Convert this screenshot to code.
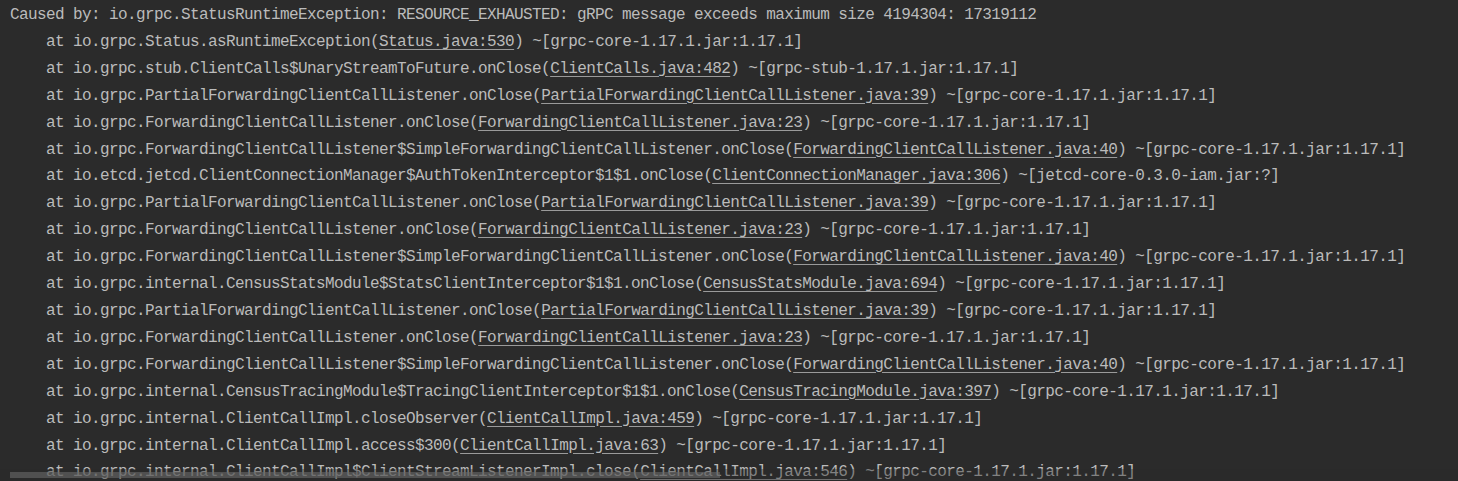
import React from "react";

type Frame = { call: string; src: string; jar: string };

const frames: Frame[] = [
    { call: "io.grpc.Status.asRuntimeException", src: "Status.java:530", jar: "grpc-core-1.17.1.jar:1.17.1" },
    { call: "io.grpc.stub.ClientCalls$UnaryStreamToFuture.onClose", src: "ClientCalls.java:482", jar: "grpc-stub-1.17.1.jar:1.17.1" },
    { call: "io.grpc.PartialForwardingClientCallListener.onClose", src: "PartialForwardingClientCallListener.java:39", jar: "grpc-core-1.17.1.jar:1.17.1" },
    { call: "io.grpc.ForwardingClientCallListener.onClose", src: "ForwardingClientCallListener.java:23", jar: "grpc-core-1.17.1.jar:1.17.1" },
    { call: "io.grpc.ForwardingClientCallListener$SimpleForwardingClientCallListener.onClose", src: "ForwardingClientCallListener.java:40", jar: "grpc-core-1.17.1.jar:1.17.1" },
    { call: "io.etcd.jetcd.ClientConnectionManager$AuthTokenInterceptor$1$1.onClose", src: "ClientConnectionManager.java:306", jar: "jetcd-core-0.3.0-iam.jar:?" },
    { call: "io.grpc.PartialForwardingClientCallListener.onClose", src: "PartialForwardingClientCallListener.java:39", jar: "grpc-core-1.17.1.jar:1.17.1" },
    { call: "io.grpc.ForwardingClientCallListener.onClose", src: "ForwardingClientCallListener.java:23", jar: "grpc-core-1.17.1.jar:1.17.1" },
    { call: "io.grpc.ForwardingClientCallListener$SimpleForwardingClientCallListener.onClose", src: "ForwardingClientCallListener.java:40", jar: "grpc-core-1.17.1.jar:1.17.1" },
    { call: "io.grpc.internal.CensusStatsModule$StatsClientInterceptor$1$1.onClose", src: "CensusStatsModule.java:694", jar: "grpc-core-1.17.1.jar:1.17.1" },
    { call: "io.grpc.PartialForwardingClientCallListener.onClose", src: "PartialForwardingClientCallListener.java:39", jar: "grpc-core-1.17.1.jar:1.17.1" },
    { call: "io.grpc.ForwardingClientCallListener.onClose", src: "ForwardingClientCallListener.java:23", jar: "grpc-core-1.17.1.jar:1.17.1" },
    { call: "io.grpc.ForwardingClientCallListener$SimpleForwardingClientCallListener.onClose", src: "ForwardingClientCallListener.java:40", jar: "grpc-core-1.17.1.jar:1.17.1" },
    { call: "io.grpc.internal.CensusTracingModule$TracingClientInterceptor$1$1.onClose", src: "CensusTracingModule.java:397", jar: "grpc-core-1.17.1.jar:1.17.1" },
    { call: "io.grpc.internal.ClientCallImpl.closeObserver", src: "ClientCallImpl.java:459", jar: "grpc-core-1.17.1.jar:1.17.1" },
    { call: "io.grpc.internal.ClientCallImpl.access$300", src: "ClientCallImpl.java:63", jar: "grpc-core-1.17.1.jar:1.17.1" },
    { call: "io.grpc.internal.ClientCallImpl$ClientStreamListenerImpl.close", src: "ClientCallImpl.java:546", jar: "grpc-core-1.17.1.jar:1.17.1" },
];

const App = () => {
    return (
        <div className="relative h-[481px] w-full overflow-hidden bg-[#2b2b2b] font-['Liberation_Mono',monospace] text-[16px] leading-[26.9px] tracking-[-0.6px] text-[#bbbbbb]">
            <div className="whitespace-pre pl-[10px] pt-[2px]">
                {/* EXCEPTION HEADER */}
                <div>Caused by: io.grpc.StatusRuntimeException: RESOURCE_EXHAUSTED: gRPC message exceeds maximum size 4194304: 17319112</div>
                {/* STACK FRAMES */}
                {frames.map((f, i) => (
                    <div key={i}>
                        {"    at "}
                        {f.call}(
                        <span className="underline decoration-[#9a9a9a] underline-offset-[3px]">{f.src}</span>
                        ) ~[{f.jar}]
                    </div>
                ))}
            </div>
            {/* HORIZONTAL SCROLLBAR */}
            <div className="absolute bottom-0 left-0 right-0 h-[12px] bg-[#2b2b2b]/40">
                <div className="ml-[10px] mt-[3px] h-[6px] w-[710px] bg-[#6b6b6b]/60" />
            </div>
        </div>
    );
};

export default App;
